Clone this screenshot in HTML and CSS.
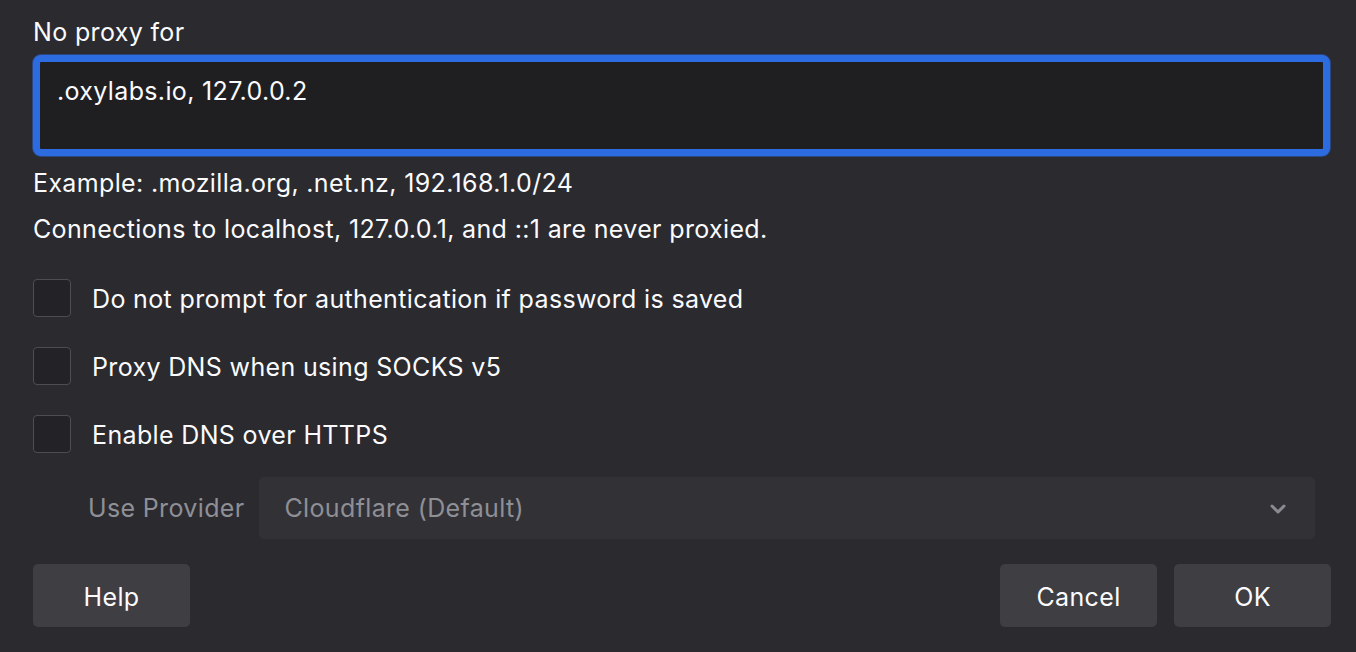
FILE: index.html
```html
<html>
<head>
<title>Connection Settings</title>
<link rel="stylesheet" href="styles.css">
</head>
<body>
<div class="dialog">
  <div class="label">No proxy for</div>
  <div class="field">.oxylabs.io, 127.0.0.2</div>
  <div class="hint first">Example: .mozilla.org, .net.nz, 192.168.1.0/24</div>
  <div class="hint">Connections to localhost, 127.0.0.1, and ::1 are never proxied.</div>

  <div class="checks">
    <div class="check"><span class="box"></span><span>Do not prompt for authentication if password is saved</span></div>
    <div class="check"><span class="box"></span><span>Proxy DNS when using SOCKS v5</span></div>
    <div class="check"><span class="box"></span><span>Enable DNS over HTTPS</span></div>
  </div>

  <div class="provider">
    <span class="muted">Use Provider</span>
    <div class="select">
      <span>Cloudflare (Default)</span>
      <svg class="chev" width="16" height="10" viewBox="0 0 16 10"><path d="M2 2 L8 8 L14 2" fill="none" stroke="#8a8a92" stroke-width="3" stroke-linecap="round" stroke-linejoin="round"/></svg>
    </div>
  </div>

  <div class="buttons">
    <div class="btn">Help</div>
    <div class="spacer"></div>
    <div class="btn">Cancel</div>
    <div class="btn">OK</div>
  </div>
</div>
</body>
</html>
```

FILE: styles.css
```css
html, body { margin:0; padding:0; background:#2a2a2f; }
body { color:#fbfbfe; font-family:Inter, "Liberation Sans", sans-serif; font-size:25px; line-height:30px; letter-spacing:0.35px; }

.dialog { padding:17px 25px 0 33px; width:1298px; height:635px; }

.label { height:30px; }

.field { margin:8px 1px 0 0; height:73px; padding:14px 17px 0 17px;
  background:#1f1f22; border:7px solid #2d6be1; border-radius:8px;
  box-shadow:0 0 0 1px rgba(45,107,225,0.45); }

.hint { margin-top:16px; }
.hint.first { margin-top:12px; }

.checks { margin-top:35px; display:flex; flex-direction:column; gap:30px; }
.check { display:flex; align-items:center; gap:21px; height:38px; }
.check span:last-child { padding-top:2px; }
.box { width:36px; height:36px; background:#232327; border:1px solid #4d4d52; border-radius:4px; }

.provider { margin:24px 16px 0 55px; display:flex; align-items:center; gap:15px; }
.muted { color:#8f8f96; }
.select { flex:1; height:62px; background:#323236; border-radius:5px; color:#8f8f96;
  display:flex; align-items:center; justify-content:space-between; padding:0 29px 0 25px; }
.chev { margin-top:2px; }

.buttons { margin-top:25px; display:flex; gap:17px; }
.spacer { flex:1; }
.btn { width:157px; height:60px; padding-top:3px; line-height:60px; text-align:center; background:#3e3e43; border-radius:5px; }
```
